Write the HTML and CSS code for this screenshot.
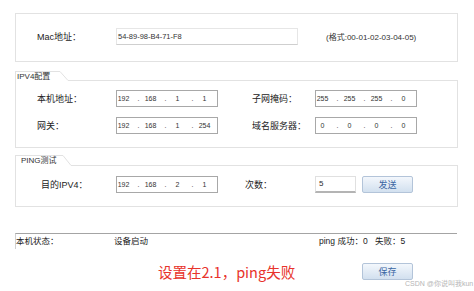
FILE: index.html
```html
<!DOCTYPE html>
<html lang="zh-CN">
<head>
  <meta charset="UTF-8">
  <title>网络配置</title>
  <link rel="stylesheet" href="styles.css">
</head>
<body>
  <div id="page">
    <div class="group group-mac">
      <div class="box">
        <div class="row">
          <span class="label">Mac地址：</span>
          <div class="field field-mac">54-89-98-B4-71-F8</div>
          <span class="hint">(格式:00-01-02-03-04-05)</span>
        </div>
      </div>
    </div>

    <div class="group group-ip">
      <div class="group-head">
        <span class="tab">IPV4配置</span>
        <svg class="slant" width="8" height="10" viewBox="0 0 8 10"><line x1="0" y1="0.5" x2="8" y2="9.5" stroke="#e2e2e2" stroke-width="1"/></svg>
        <span class="head-rest"></span>
      </div>
      <div class="box">
        <div class="row">
          <span class="label">本机地址：</span>
          <div class="field field-ip"><span>192</span><i>.</i><span>168</span><i>.</i><span>1</span><i>.</i><span>1</span></div>
          <span class="label label-right">子网掩码：</span>
          <div class="field field-ip"><span>255</span><i>.</i><span>255</span><i>.</i><span>255</span><i>.</i><span>0</span></div>
        </div>
        <div class="row">
          <span class="label">网关：</span>
          <div class="field field-ip"><span>192</span><i>.</i><span>168</span><i>.</i><span>1</span><i>.</i><span>254</span></div>
          <span class="label label-right">域名服务器：</span>
          <div class="field field-ip"><span>0</span><i>.</i><span>0</span><i>.</i><span>0</span><i>.</i><span>0</span></div>
        </div>
      </div>
    </div>

    <div class="group group-ping">
      <div class="group-head">
        <span class="tab">PING测试</span>
        <svg class="slant" width="8" height="11" viewBox="0 0 8 11"><line x1="0" y1="0.5" x2="8" y2="10.5" stroke="#e2e2e2" stroke-width="1"/></svg>
        <span class="head-rest"></span>
      </div>
      <div class="box">
        <div class="row">
          <span class="label label-ping">目的IPV4：</span>
          <div class="field field-ip"><span>192</span><i>.</i><span>168</span><i>.</i><span>2</span><i>.</i><span>1</span></div>
          <span class="label label-count">次数：</span>
          <div class="field field-count">5</div>
          <button class="btn btn-send">发送</button>
        </div>
      </div>
    </div>

    <div class="status">
      <span class="st-name">本机状态：</span>
      <span class="st-value">设备启动</span>
      <span class="st-ok">ping 成功：0</span>
      <span class="st-fail">失败：5</span>
    </div>

    <div class="footer">
      <span class="note">设置在2.1，ping失败</span>
      <button class="btn btn-save">保存</button>
    </div>

    <span class="watermark">CSDN @你说叫我kun</span>
  </div>
</body>
</html>
```

FILE: styles.css
```css
body {
  margin: 0;
  background: #fff;
  font-family: "Liberation Sans", "Noto Sans CJK SC", sans-serif;
  color: #2a2a2a;
}

#page {
  position: relative;
  width: 474px;
  height: 291px;
  overflow: hidden;
}

.group {
  margin: 0 16px 0 15px;
}

.group-mac {
  margin-top: 13px;
}

.group-ip {
  margin-top: 9px;
}

.group-ping {
  margin-top: 7px;
}

.group-head {
  display: flex;
  height: 10px;
  box-sizing: border-box;
}

.group-ping .group-head {
  height: 11px;
}

.tab {
  width: 45px;
  box-sizing: border-box;
  border-top: 1px solid #e2e2e2;
  border-left: 1px solid #e2e2e2;
  padding-left: 1px;
  font-size: 8px;
  line-height: 10px;
  color: #333;
  white-space: nowrap;
}

.group-ping .tab {
  width: 48px;
  padding-left: 5px;
}

.slant {
  display: block;
  flex: none;
}

.head-rest {
  flex: 1;
  border-bottom: 1px solid #e2e2e2;
}

.box {
  border: 1px solid #e2e2e2;
}

.group-ip .box,
.group-ping .box {
  border-top: none;
}

.group-mac .box {
  padding: 14px 0 16px 21px;
}

.group-ip .box {
  padding: 9px 0 13px 21px;
}

.group-ping .box {
  padding: 10px 0 13px 21px;
}

.row {
  display: flex;
  align-items: center;
  height: 17px;
}

.row + .row {
  margin-top: 10px;
}

.label {
  width: 79px;
  flex: none;
  font-size: 9px;
  color: #222;
  white-space: nowrap;
}

.label-right {
  width: 63px;
}

.label-ping {
  width: 75px;
  padding-left: 4px;
}

.label-count {
  width: 70px;
}

.field {
  box-sizing: border-box;
  height: 17px;
  background: #fff;
  flex: none;
}

.field-mac {
  width: 182px;
  border: 1px solid #e6e6e6;
  border-bottom-color: #cfcfcf;
  padding-left: 1px;
  font-size: 7.5px;
  line-height: 15px;
  color: #333;
}

.hint {
  margin-left: 28px;
  font-size: 8px;
  color: #333;
  white-space: nowrap;
}

.field-ip {
  display: flex;
  width: 102px;
  border: 1px solid #a8a8a8;
  font-size: 7px;
  line-height: 15px;
  color: #333;
}

.field-ip span {
  width: 13px;
  text-align: center;
  white-space: nowrap;
}

.field-ip i {
  width: 14px;
  padding-left: 3px;
  box-sizing: border-box;
  text-align: center;
  font-style: normal;
}

.field-ip + .label-right {
  margin-left: 34px;
}

.field-ip + .label-count {
  margin-left: 27px;
}

.field-count {
  width: 41px;
  border: 1px solid #e0e0e0;
  border-bottom: 2px solid #b4b4b4;
  padding-left: 3px;
  font-size: 8px;
  line-height: 14px;
}

.btn {
  width: 51px;
  height: 17px;
  padding: 0;
  border: 1px solid #b3c4d9;
  border-radius: 2px;
  background: linear-gradient(#f3f7fc, #d2e0ef);
  color: #3b66a3;
  font-family: "Noto Sans CJK SC", sans-serif;
  font-size: 9px;
  line-height: 15px;
}

.btn-send {
  margin-left: 6px;
}

.status {
  display: flex;
  margin: 26px 17px 0 15px;
  border-top: 1px solid #a4a4a4;
  border-left: 1px solid #d0d0d0;
  font-size: 8.5px;
  line-height: 15px;
  color: #222;
  white-space: nowrap;
}

.st-name {
  width: 98px;
}

.st-value {
  width: 205px;
}

.st-ok {
  width: 56px;
}

.footer {
  display: flex;
  align-items: center;
  margin-top: 14px;
  padding-left: 158px;
}

.note {
  width: 204px;
  font-family: "Noto Sans CJK SC", sans-serif;
  font-size: 14.5px;
  line-height: 17px;
  color: #e8332b;
  white-space: nowrap;
}

.watermark {
  position: absolute;
  left: 405px;
  top: 280px;
  font-size: 7px;
  line-height: 8px;
  color: #b5b5b5;
  white-space: nowrap;
}
```
